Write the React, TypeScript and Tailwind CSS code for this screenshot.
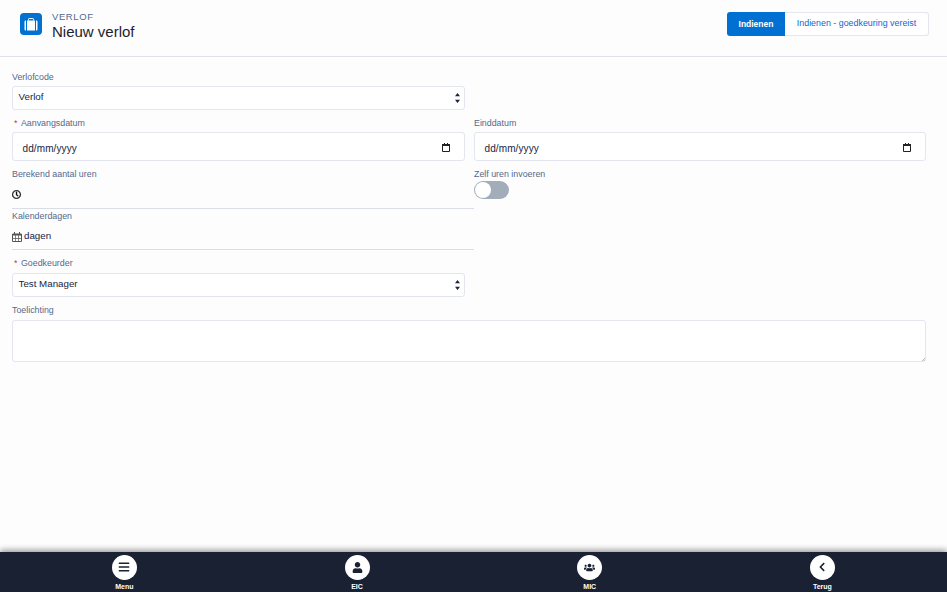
import React from "react";
import { FaUser, FaUsers, FaChevronLeft, FaBars, FaRegClock } from "react-icons/fa";

function Req() {
  return <span className="text-[#c23934] mr-[3.5px] ml-[2px]">*</span>;
}

function Label({ children, required }: { children: React.ReactNode; required?: boolean }) {
  return (
    <div className="h-[12px] leading-[12px] text-[8.85px] text-[#54698d]">
      {required && <Req />}
      {children}
    </div>
  );
}

function Arrows() {
  return (
    <svg width="5" height="12" viewBox="0 0 5 12" className="text-[#16263f]">
      <path d="M2.5 1 L5 4.2 H0 Z M2.5 11 L0 7.8 H5 Z" fill="currentColor" />
    </svg>
  );
}

function Select({ value, gap }: { value: string; gap: string }) {
  return (
    <div className={`${gap} h-[24px] flex items-center justify-between rounded-[3px] border border-[#e3e6ef] bg-white pl-[5.5px] pr-[4px] pb-[1px] text-[9.75px] text-[#16263f]`}>
      <span>{value}</span>
      <Arrows />
    </div>
  );
}

function DateField() {
  return (
    <div className="mt-[3px] h-[29px] flex items-center justify-between rounded-[3px] border border-[#e3e6ef] bg-white pl-[9.5px] pr-[13px] pt-[4px] text-[10px] text-[#16263f]">
      <span className="tracking-[0.1px]">dd/mm/yyyy</span>
      <svg width="9" height="9" viewBox="0 0 9 9" className="-mt-[2px]">
        <path d="M0.5 1.5 H7.5 V8.5 H0.5 Z" fill="none" stroke="#222" strokeWidth="1" />
        <path d="M0 1 H8 V3 H0 Z M2 0 H3 V1 H2 Z M5 0 H6 V1 H5 Z" fill="#222" />
      </svg>
    </div>
  );
}

function NavItem({ label, children }: { label: string; children: React.ReactNode }) {
  return (
    <div className="w-[232.7px] flex flex-col items-center pt-[2.5px]">
      <div className="w-[25px] h-[25px] rounded-full bg-white flex items-center justify-center text-[#1a2133]">
        {children}
      </div>
      <div className="mt-[2px] text-[7px] leading-[9px] font-bold text-white">{label}</div>
    </div>
  );
}

export default function App() {
  return (
    <div className="h-[592px] w-[947px] flex flex-col overflow-hidden bg-[#fdfdfe] font-['Liberation_Sans',Arial,sans-serif]">
      <header className="h-[57px] shrink-0 flex items-start justify-between border-b border-[#e0e2e9] pl-[20px] pr-[18px]">
        <div className="flex items-start pt-[13px]">
          <div className="w-[22px] h-[22px] rounded-[4px] bg-[#0070d2] flex items-center justify-center">
            <svg width="14" height="13" viewBox="0 0 14 13">
              <path d="M4.5 2.5 V1.2 Q4.5 0.5 5.2 0.5 H8.8 Q9.5 0.5 9.5 1.2 V2.5" fill="none" stroke="#fff" strokeWidth="1" />
              <path d="M0.5 3.6 Q0.5 2.5 1.6 2.5 H2 V12.5 H1.6 Q0.5 12.5 0.5 11.4 Z M3 2.5 H11 V12.5 H3 Z M12 2.5 H12.4 Q13.5 2.5 13.5 3.6 V11.4 Q13.5 12.5 12.4 12.5 H12 Z" fill="#fff" />
            </svg>
          </div>
          <div className="ml-[10px] -mt-[2px]">
            <div className="text-[9.5px] leading-[12px] tracking-[0.6px] text-[#54698d]">VERLOF</div>
            <div className="text-[15px] leading-[18px] text-[#1b2230]">Nieuw verlof</div>
          </div>
        </div>
        <div className="mt-[12px] flex h-[24px] text-[8.9px]">
          <div className="w-[58px] flex items-center justify-center rounded-l-[3px] bg-[#0070d2] text-[8.5px] font-bold text-white">Indienen</div>
          <div className="w-[144px] flex items-center justify-center rounded-r-[3px] border border-l-0 border-[#e3e6ef] bg-white text-[#1265d8]">Indienen - goedkeuring vereist</div>
        </div>
      </header>

      <main className="flex-1 min-h-0 pl-[12px] pt-[14px] w-[936px]">
        <div className="grid grid-cols-2">
          <div className="pr-[9px]">
            <Label>Verlofcode</Label>
            <Select value="Verlof" gap="mt-[3px]" />
          </div>
          <div />
          <div className="pr-[9px] mt-[7px]">
            <Label required>Aanvangsdatum</Label>
            <DateField />
          </div>
          <div className="pr-[10px] mt-[7px]">
            <Label>Einddatum</Label>
            <DateField />
          </div>
          <div className="mt-[7px]">
            <Label>Berekend aantal uren</Label>
            <div className="h-[28px] mt-[1px] flex items-center border-b border-[#d8dde6] text-[#111]">
              <FaRegClock size={9} strokeWidth={20} />
            </div>
            <div className="mt-[1px]">
              <Label>Kalenderdagen</Label>
              <div className="h-[28px] flex items-center border-b border-[#d8dde6] pt-[5px] pb-[3px] text-[9.75px] text-[#16263f]">
                <svg width="10" height="10" viewBox="0 0 10 10" className="mr-[2px]">
                  <path d="M0.5 2 H9.5 V9.5 H0.5 Z" fill="none" stroke="#555" strokeWidth="1" />
                  <path d="M2 0 H3 V3 H2 Z M7 0 H8 V3 H7 Z M0 2 H10 V3.5 H0 Z M3 3.5 H3.7 V9.5 H3 Z M6.2 3.5 H6.9 V9.5 H6.2 Z M0.5 6 H9.5 V6.7 H0.5 Z" fill="#555" />
                </svg>
                dagen
              </div>
            </div>
          </div>
          <div className="mt-[7px]">
            <Label>Zelf uren invoeren</Label>
            <div className="mt-[1px] w-[35px] h-[18px] rounded-full bg-[#a3adba] relative">
              <div className="absolute left-[1px] top-[1px] w-[16px] h-[16px] rounded-full bg-white" />
            </div>
          </div>
          <div className="pr-[9px] mt-[7px]">
            <Label required>Goedkeurder</Label>
            <Select value="Test Manager" gap="mt-[4px]" />
          </div>
          <div />
          <div className="col-span-2 pr-[10px] mt-[7px]">
            <Label>Toelichting</Label>
            <div className="mt-[4px] h-[42px] rounded-[3px] border border-[#e3e6ef] bg-white relative">
              <svg width="3" height="3" viewBox="0 0 3 3" className="absolute right-0 bottom-0">
                <path d="M0 3 L3 0 M1.5 3 L3 1.5" stroke="#999" strokeWidth="0.6" />
              </svg>
            </div>
          </div>
        </div>
      </main>

      <nav className="h-[40px] shrink-0 bg-[#1a2133] flex justify-center shadow-[0_-2px_6px_rgba(0,0,0,0.4)]">
        <div className="flex w-full pl-[8px]">
          <NavItem label="Menu"><FaBars size={12} /></NavItem>
          <NavItem label="EIC"><FaUser size={11} /></NavItem>
          <NavItem label="MIC"><FaUsers size={11} /></NavItem>
          <NavItem label="Terug"><FaChevronLeft size={10} /></NavItem>
        </div>
      </nav>
    </div>
  );
}
